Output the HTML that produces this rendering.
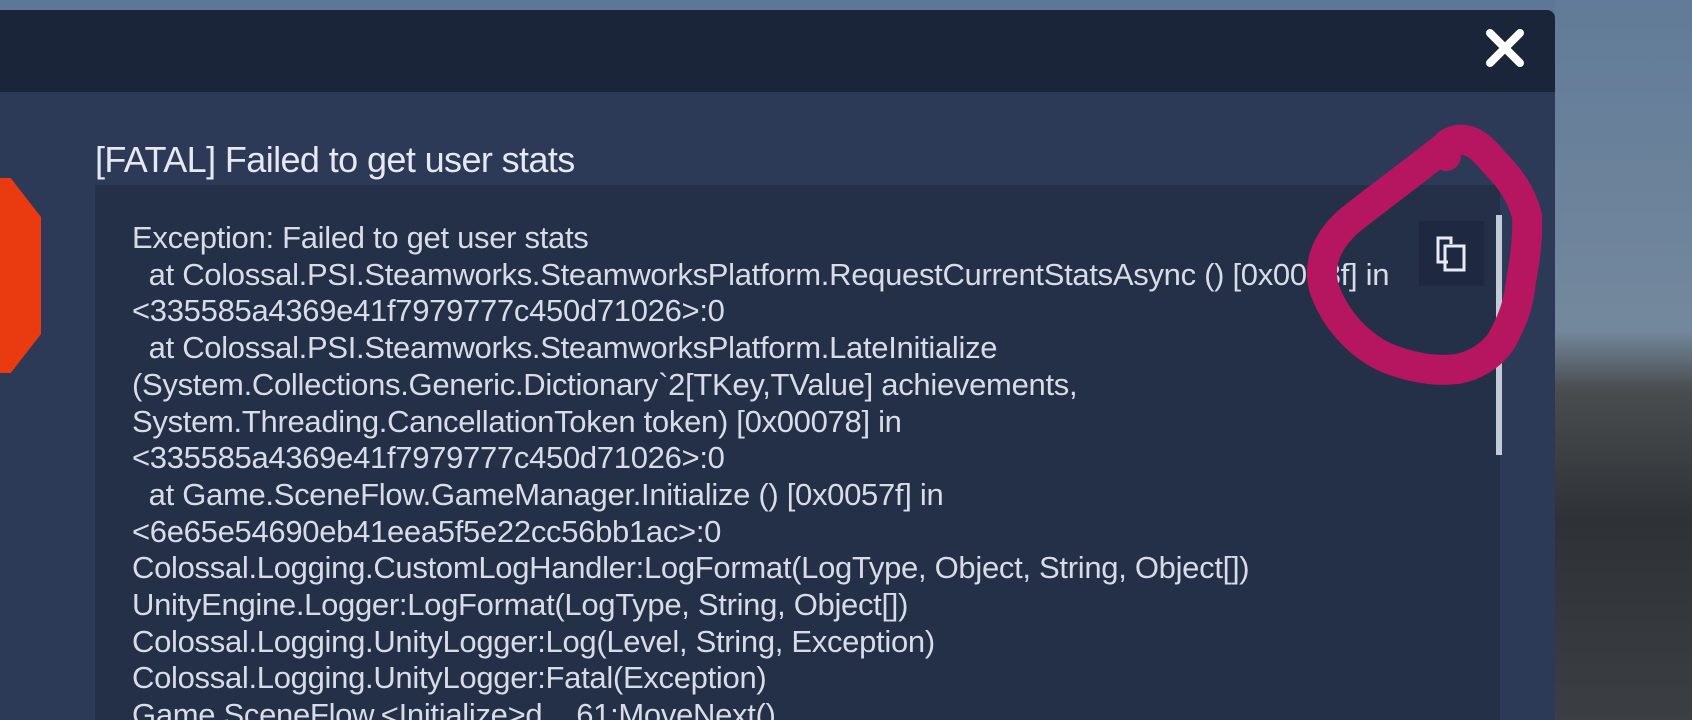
<!DOCTYPE html>
<html style="overflow:hidden;height:720px"><head><style>
body{margin:0;width:1692px;height:720px;overflow:hidden;position:relative;background:#5d7896;font-family:"Liberation Sans",sans-serif}
.bg{position:absolute;left:1555px;top:0;width:137px;height:720px;background:linear-gradient(#617b98 0,#74889d 330px,#4a4d50 390px,#2e3236 520px,#3b3f43 720px)}
.hdr{position:absolute;left:0;top:10px;width:1555px;height:82px;background:#1b2539;border-radius:0 8px 0 0}
.body{position:absolute;left:0;top:92px;width:1555px;height:628px;background:#2c3957}
.oct{position:absolute;left:-60px;top:178px;width:101px;height:195px;background:#e93a10;clip-path:polygon(30% 0,70% 0,100% 20%,100% 80%,70% 100%,30% 100%,0 80%,0 20%)}
.title{position:absolute;left:95px;top:139px;font-size:36px;color:#e6e9f0;letter-spacing:-0.6px;white-space:nowrap}
.box{position:absolute;left:95px;top:185px;width:1405px;height:535px;background:#243048;overflow:hidden}
.txt{position:absolute;left:37px;top:35px;font-size:31px;line-height:36.7px;color:#d8dce6;white-space:pre;letter-spacing:-0.3px}
.sb{position:absolute;left:1496px;top:215px;width:6px;height:240px;background:#c3cad8}
.cbtn{position:absolute;left:1419px;top:221px;width:65px;height:65px;background:#1e2840}
</style></head><body>
<div class="bg"></div>
<div class="hdr"></div>
<div class="body"></div>
<div class="oct"></div>
<div class="title">[FATAL] Failed to get user stats</div>
<div class="box"><div class="txt">Exception: Failed to get user stats
  at Colossal.PSI.Steamworks.SteamworksPlatform.RequestCurrentStatsAsync () [0x0003f] in
&lt;335585a4369e41f7979777c450d71026&gt;:0
  at Colossal.PSI.Steamworks.SteamworksPlatform.LateInitialize
(System.Collections.Generic.Dictionary`2[TKey,TValue] achievements,
System.Threading.CancellationToken token) [0x00078] in
&lt;335585a4369e41f7979777c450d71026&gt;:0
  at Game.SceneFlow.GameManager.Initialize () [0x0057f] in
&lt;6e65e54690eb41eea5f5e22cc56bb1ac&gt;:0
Colossal.Logging.CustomLogHandler:LogFormat(LogType, Object, String, Object[])
UnityEngine.Logger:LogFormat(LogType, String, Object[])
Colossal.Logging.UnityLogger:Log(Level, String, Exception)
Colossal.Logging.UnityLogger:Fatal(Exception)
Game.SceneFlow.&lt;Initialize&gt;d__61:MoveNext()</div></div>
<div class="sb"></div>
<div class="cbtn"></div>
<svg width="1692" height="720" style="position:absolute;left:0;top:0">
<g stroke="#fff" stroke-width="8" stroke-linecap="round"><line x1="1490" y1="33" x2="1520" y2="63"/><line x1="1520" y1="33" x2="1490" y2="63"/></g>
<g fill="none" stroke="#e8ebf2" stroke-width="3"><path d="M1448 262 H1438 V238 H1451 V244"/><rect x="1445" y="246" width="19" height="24"/></g>
<path d="M1446 146 C1410 175 1375 200 1349 221 C1322 245 1318 270 1325 291 C1340 330 1370 352 1392 360 C1420 370 1440 371 1457 369 C1480 365 1498 350 1505 334 C1515 315 1519 300 1521 281 C1526 255 1528 235 1527 216 C1522 195 1510 178 1494 162 C1480 145 1470 138 1457 140 C1448 142 1440 148 1446 156" fill="none" stroke="#b5165f" stroke-width="30" stroke-linejoin="round" stroke-linecap="round"/>
</svg>
</body></html>
